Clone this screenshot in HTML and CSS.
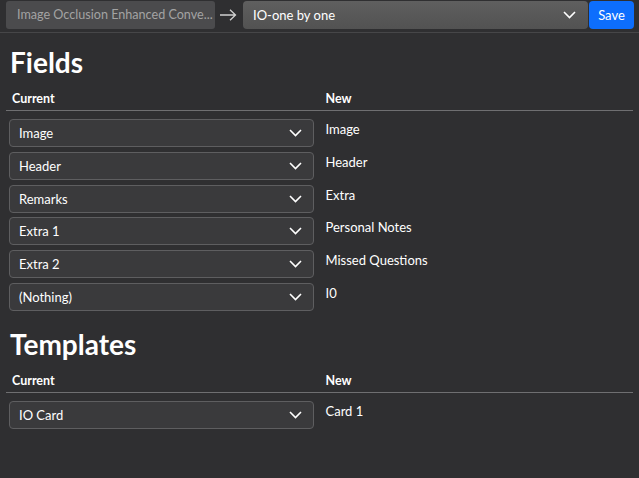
FILE: index.html
```html
<!DOCTYPE html>
<html lang="en">
<head>
    <meta charset="UTF-8">
    <title>Change Notetype</title>
    <link rel="stylesheet" href="styles.css">
</head>
<body>
    <div class="topbar">
        <div class="old-type">Image Occlusion Enhanced Conve...</div>
        <svg class="arrow" width="17" height="12" viewBox="0 0 17 12"><path d="M0 6h15.5M10 0.8l5.5 5.2-5.5 5.2" fill="none" stroke="#d0d0d0" stroke-width="1.3"/></svg>
        <div class="new-type">
            <span>IO-one by one</span>
            <svg class="chev" width="13" height="8" viewBox="0 0 13 8"><path d="M1 1l5.5 5.5 5.5-5.5" fill="none" stroke="#fff" stroke-width="1.6"/></svg>
        </div>
        <button class="save">Save</button>
    </div>

    <div class="main">
        <h1>Fields</h1>
        <div class="table">
            <div class="head">
                <div>Current</div>
                <div>New</div>
            </div>
            <div class="rows">
                <div class="row">
                    <div class="select"><span>Image</span><svg class="chev" width="13" height="8" viewBox="0 0 13 8"><path d="M1 1l5.5 5.5 5.5-5.5" fill="none" stroke="#fff" stroke-width="1.6"/></svg></div>
                    <div class="new">Image</div>
                </div>
                <div class="row">
                    <div class="select"><span>Header</span><svg class="chev" width="13" height="8" viewBox="0 0 13 8"><path d="M1 1l5.5 5.5 5.5-5.5" fill="none" stroke="#fff" stroke-width="1.6"/></svg></div>
                    <div class="new">Header</div>
                </div>
                <div class="row">
                    <div class="select"><span>Remarks</span><svg class="chev" width="13" height="8" viewBox="0 0 13 8"><path d="M1 1l5.5 5.5 5.5-5.5" fill="none" stroke="#fff" stroke-width="1.6"/></svg></div>
                    <div class="new">Extra</div>
                </div>
                <div class="row">
                    <div class="select"><span>Extra 1</span><svg class="chev" width="13" height="8" viewBox="0 0 13 8"><path d="M1 1l5.5 5.5 5.5-5.5" fill="none" stroke="#fff" stroke-width="1.6"/></svg></div>
                    <div class="new">Personal Notes</div>
                </div>
                <div class="row">
                    <div class="select"><span>Extra 2</span><svg class="chev" width="13" height="8" viewBox="0 0 13 8"><path d="M1 1l5.5 5.5 5.5-5.5" fill="none" stroke="#fff" stroke-width="1.6"/></svg></div>
                    <div class="new">Missed Questions</div>
                </div>
                <div class="row">
                    <div class="select"><span>(Nothing)</span><svg class="chev" width="13" height="8" viewBox="0 0 13 8"><path d="M1 1l5.5 5.5 5.5-5.5" fill="none" stroke="#fff" stroke-width="1.6"/></svg></div>
                    <div class="new">I0</div>
                </div>
            </div>
        </div>

        <h1 class="second">Templates</h1>
        <div class="table">
            <div class="head">
                <div>Current</div>
                <div>New</div>
            </div>
            <div class="rows">
                <div class="row">
                    <div class="select"><span>IO Card</span><svg class="chev" width="13" height="8" viewBox="0 0 13 8"><path d="M1 1l5.5 5.5 5.5-5.5" fill="none" stroke="#fff" stroke-width="1.6"/></svg></div>
                    <div class="new">Card 1</div>
                </div>
            </div>
        </div>
    </div>
</body>
</html>
```

FILE: styles.css
```css
body {
    margin: 0;
    background: #2f2f31;
    color: #fff;
    font-family: Lato, 'Noto Sans', sans-serif;
    font-size: 13px;
    height: 478px;
    overflow: hidden;
}

.topbar {
    display: flex;
    align-items: center;
    height: 33px;
    padding: 0 5px 3px 6px;
    border-bottom: 1px solid #464648;
    box-sizing: border-box;
}

.old-type {
    width: 209px;
    height: 28px;
    line-height: 28px;
    padding: 0 4px 0 11px;
    box-sizing: border-box;
    background: #4b4b4d;
    color: #a3a3a3;
    border-radius: 3px;
    font-size: 12.6px;
    white-space: nowrap;
    overflow: hidden;
}

.arrow {
    margin: 0 6px 0 5px;
    display: block;
}

.new-type {
    flex: 1;
    display: flex;
    align-items: center;
    justify-content: space-between;
    height: 28px;
    padding: 0 12px 0 10px;
    background: linear-gradient(#5f5f5f, #525252);
    border-radius: 4px;
    box-sizing: border-box;
}

.save {
    margin-left: 1px;
    height: 28px;
    width: 45px;
    border: none;
    border-radius: 4px;
    background: #0d6efd;
    color: #fff;
    font-family: inherit;
    font-size: 13px;
    padding: 0;
}

.main {
    padding: 0 6px;
}

h1 {
    margin: 11px 0 0 4px;
    font-size: 28px;
    font-weight: 700;
    line-height: 36px;
}

h1.second {
    margin-top: 15px;
}

.head {
    display: grid;
    grid-template-columns: 1fr 1fr;
    font-weight: 700;
    font-size: 12.5px;
    padding: 11px 0 4px;
    border-bottom: 1px solid #6f6f71;
}

.head div {
    padding-left: 6px;
}

.rows {
    padding-top: 8px;
    display: flex;
    flex-direction: column;
    gap: 4.8px;
}

.row {
    display: grid;
    grid-template-columns: 1fr 1fr;
}

.select {
    display: flex;
    align-items: center;
    justify-content: space-between;
    height: 28px;
    margin: 0 6px 0 3px;
    padding: 0 11px 0 9px;
    background: #3a3a3c;
    border: 1px solid #5e5e60;
    border-radius: 4px;
    box-sizing: border-box;
}

.new {
    padding: 2px 0 0 6px;
}

.chev {
    display: block;
}
```
